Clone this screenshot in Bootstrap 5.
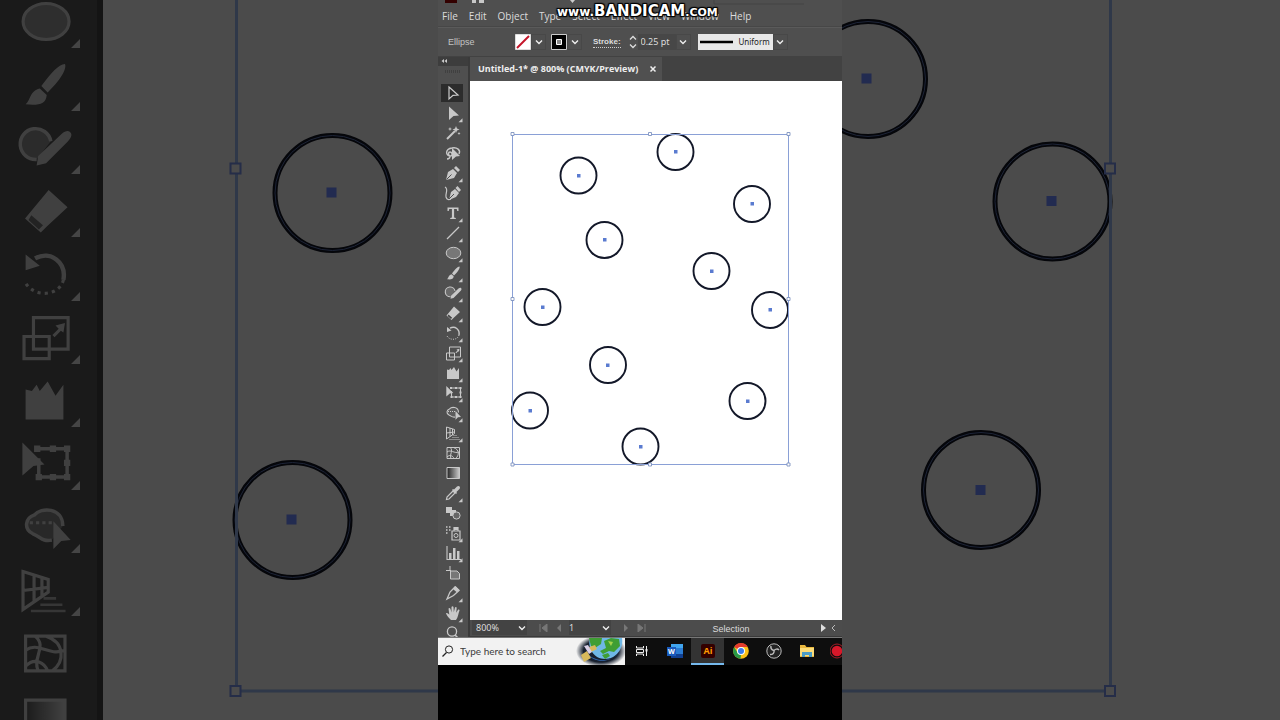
<!DOCTYPE html>
<html lang="en">
<head>
<meta charset="utf-8">
<meta name="viewport" content="width=device-width, initial-scale=1">
<title>Untitled-1* @ 800% (CMYK/Preview)</title>
<link href="https://cdn.jsdelivr.net/npm/bootstrap@5.3.0/dist/css/bootstrap.min.css" rel="stylesheet">
<style>
  body { background: #000; font-family: "Noto Sans", "Open Sans", sans-serif; font-size: 10px; line-height: 16px; color: #dcdcdc; }
  .stage { display: grid; grid-template-columns: 438fr 404fr 438fr; }
  .stage > * { min-width: 0; min-height: 0; }
  .backdrop { background: #4b4b4b; }
  .backdrop svg { width: 100%; height: 100%; }
  svg { display: block; flex: none; }
  a { color: inherit; text-decoration: none; }
  button { border: 0; padding: 0; background: none; color: inherit; display: flex; align-items: center; justify-content: center; flex: none; }
  input { border: 0; padding: 0; background: none; color: inherit; min-width: 0; line-height: 14px; }
  .app-window { background: #4f4f4f; }
  .title-strip { height: 7px; padding-left: 6px; }
  .menu-row { height: 20px; padding-left: 4px; gap: 11px; border-bottom: 1px solid #474747; font-family: "Open Sans", "Noto Sans", sans-serif; }
  .watermark { left: 119px; top: 2px; color: #fff; font-family: "DejaVu Sans", sans-serif; font-weight: 700; font-size: 15px; line-height: 18px; text-shadow: 0 0 2px #000, 1px 1px 1px #000, -1px -1px 1px #000, 1px -1px 1px #000, -1px 1px 1px #000; }
  .watermark small { font-size: 12px; }
  .watermark .tail { font-size: 11px; }
  .control-row { height: 30px; padding-left: 10px; border-top: 1px solid #5a5a5a; border-bottom: 1px solid #424242; }
  .kind { width: 67px; color: #c4c4c4; font-family: "Liberation Sans", sans-serif; font-size: 9px; }
  .drop { width: 15px; height: 16px; border: 1px solid #484848; }
  .swatch-two { margin-left: 5px; }
  .stroke-name { font-family: "Liberation Sans", sans-serif; font-size: 8px; font-weight: 700; line-height: 11px; border-bottom: 1px dotted #ccc; margin: 0 7px 0 11px; }
  .weight { width: 38px; height: 16px; background: #474747; padding-left: 3px; font-size: 9px; }
  .profile { width: 75px; height: 16px; background: #e8e8e8; color: #222; font-size: 8px; gap: 5px; margin-left: 7px; }
  .tool-column { width: 32px; flex: none; background: #4f4f4f; border-right: 2px solid #3a3a3a; }
  .tool-head { height: 9px; background: #3d3d3d; }
  .tool-grip { height: 17px; padding-top: 4px; }
  .tool-grip i { display: block; width: 16px; height: 3px; margin: 0 auto; background: repeating-linear-gradient(90deg, #404040 0 1px, #4f4f4f 1px 2px); }
  .tool-column button { width: 29px; height: 20px; }
  .tool-column button.active { background: linear-gradient(#2c2c2c, #2c2c2c) 3px 1px / 22px 18px no-repeat; }
  .tab-row { height: 24px; background: #424242; }
  .doc-tab { background: #505050; width: 192px; padding-left: 8px; font-family: "Open Sans", "Noto Sans", sans-serif; font-weight: 700; font-size: 9px; color: #eee; white-space: nowrap; }
  .artboard { background: #fff; min-height: 0; }
  .artboard svg { width: 100%; height: 100%; }
  .status-row { height: 17px; background: #4c4c4c; border-bottom: 1px solid #3a3a3a; font-size: 9px; padding-left: 2px; }
  .current-tool { font-family: "Liberation Sans", sans-serif; font-size: 9px; padding-top: 2px; }
  .field { background: #434343; height: 15px; }
  .zoom-level { width: 41px; }
  .page-number { width: 32px; }
  .bottom-line { height: 1px; background: #777; }
  .task-row { height: 27px; background: #0e0e0e; }
  .search-box { width: 187px; flex: none; background: #f2f2f2; color: #333; padding-left: 4px; }
  .search-box input { font-family: Lato, "Open Sans", sans-serif; font-size: 10px; flex: 1; margin-left: 6px; }
  .search-box input::placeholder { color: #3c3c3c; opacity: 1; }
  .task-row button { width: 33px; }
  .task-row button.active { background: #333; border-bottom: 2px solid #76b9ed; }
  .black-foot { height: 56px; }
</style>
</head>
<body>

<!-- shared drawing symbols -->
<svg width="0" height="0" class="position-absolute" aria-hidden="true">
  <defs>
    <linearGradient id="fade"><stop offset="0" stop-color="#222"/><stop offset="1" stop-color="#ccc"/></linearGradient>
    <radialGradient id="space"><stop offset=".7" stop-color="#17202f"/><stop offset="1" stop-color="#17202f" stop-opacity="0"/></radialGradient>
  </defs>
  <symbol id="corner" viewBox="0 0 20 20"><path d="M20 16v4h-4z" transform="translate(-.5 -.8)" fill="#c8c8c8"/></symbol>
  <g fill="#c8c8c8" stroke="none">
    <symbol id="t-select" viewBox="0 0 20 20"><path d="M6 4l9 8-5 .4L6 16z" fill="none" stroke="#ccc" stroke-width="1.2"/></symbol>
    <symbol id="t-direct" viewBox="0 0 20 20"><path d="M6 3.500l10 9-5.500.5L6 17z" fill="#c8c8c8"/></symbol>
    <symbol id="t-wand" viewBox="0 0 20 20"><path d="M4 16l8-8" stroke="#c8c8c8" stroke-width="2"/><path d="M13 3l1 2.500L16.500 6.500 14 7.500 13 10l-1-2.500L9.500 6.500 12 5.500zM7 4l.6 1.400L9 6l-1.400.6L7 8l-.6-1.400L5 6l1.400-.6zM16 9l.5 1 1 .5-1 .5-.5 1-.5-1-1-.5 1-.5z" fill="#c8c8c8"/></symbol>
    <symbol id="t-lasso" viewBox="0 0 20 20"><path d="M8 13c-6 0-6-7 1-8 5-1 9 2 7 6M8 13c2-1 1-4-1-4s-2 3 0 4c0 2-1 3-3 3" fill="none" stroke="#c8c8c8" stroke-width="1.400"/><path d="M9 5l8 8-4 .4L9 17z" fill="#c8c8c8"/></symbol>
    <symbol id="t-pen" viewBox="0 0 20 20"><path d="M3 17l2-8 5-3 4 4-3 5zM11 5l2-2 4 4-2 2z" fill="#c8c8c8"/><path d="M3.500 16.500l5-5" stroke="#4f4f4f"/></symbol>
    <symbol id="t-curve" viewBox="0 0 20 20"><path d="M6 17l2-8 4-3 4 4-3 4zM12.500 5l2-2 3.500 4-2 2z" fill="#c8c8c8"/><path d="M6 16l5-5" stroke="#4f4f4f"/><path d="M2 4c4 2 0 7 1 10s3 3 5 2" fill="none" stroke="#c8c8c8" stroke-width="1.200"/></symbol>
    <symbol id="t-line" viewBox="0 0 20 20"><path d="M4 16L16 4" stroke="#c8c8c8" stroke-width="1.300"/></symbol>
    <symbol id="t-ellipse" viewBox="0 0 20 20"><ellipse cx="10.500" cy="10" rx="7.300" ry="5.700" fill="#777" stroke="#c8c8c8"/></symbol>
    <symbol id="t-brush" viewBox="0 0 20 20"><path d="M16.500 3.500c.5 1-.3 4-5.500 9L9 10.500c3-4 5.500-7 7.500-7zM8.500 11.300l2.200 2c-.2 3-2.700 3.400-6.700 3 1.500-1 1.300-4.300 4.500-5z" fill="#c8c8c8"/></symbol>
    <symbol id="t-blob" viewBox="0 0 20 20"><path d="M12 8A4.900 4.900 0 1 0 7.500 13.800" fill="#6a6a6a" stroke="#c8c8c8" stroke-width="1.100"/><path d="M18 5c1 .7.600 2-1 3.500L10.500 15l-3 .7.500-3L15.500 5.600C16.500 4.700 17.500 4.500 18 5z" fill="#c8c8c8"/></symbol>
    <symbol id="t-eraser" viewBox="0 0 20 20"><path d="M11 3.500l6 5.500-6.500 6-2 2-5-4.500z" fill="#c8c8c8"/><path d="M5.500 11.500l3.700 3.200-1.300 1.300-3.300-3z" fill="#444"/></symbol>
    <symbol id="t-rotate" viewBox="0 0 20 20"><path d="M7 5.200c5-2.700 10 1.300 9 6.800" fill="none" stroke="#c8c8c8" stroke-width="1.400"/><path d="M4 4l4.500 3.500L4 9z" fill="#c8c8c8"/><path d="M16 12c-1 5-9 6-12 1" fill="none" stroke="#c8c8c8" stroke-width="1" stroke-dasharray="1 1.300"/></symbol>
    <symbol id="t-scale" viewBox="0 0 20 20"><path d="M6.500 4h11v10h-11zM3.500 10h8v7h-8z" fill="none" stroke="#c8c8c8"/><path d="M12.500 9.500l2-2-1-1 3-.8-.5 3-.8-.5-2 2z" fill="#c8c8c8"/></symbol>
    <symbol id="t-width" viewBox="0 0 20 20"><path d="M4 6.500l2 .5 1.500-2 1 2L11 4l2.500 4.500L16 5v11H4z" fill="#c8c8c8"/></symbol>
    <symbol id="t-free" viewBox="0 0 20 20"><path d="M7.500 5h10v9h-9V8" fill="none" stroke="#c8c8c8" stroke-width="1.100"/><path d="M16.500 4h2v2h-2zM16.500 13h2v2h-2zM7.500 13h2v2h-2zM12 4h2v2h-2zM12 13h2v2h-2zM16.500 8.500h2v2h-2zM7 4h2v2H7z M3.300 3l7 7-3.500.5-3.500 3z" fill="#c8c8c8"/></symbol>
    <symbol id="t-builder" viewBox="0 0 20 20"><path d="M12 14c-3 .6-3.500-1-6-2-3-1.500-2.500-5 .5-6 2-2.500 9-2.500 9 3.500" fill="#5c5c5c" stroke="#c8c8c8" stroke-width="1.100"/><path d="M5 8.500h8" stroke="#c8c8c8" stroke-dasharray="1 1"/><path d="M12.500 8l5.500 6-3 .3-2.500 2.500z" fill="#c8c8c8"/></symbol>
    <symbol id="t-persp" viewBox="0 0 20 20"><path d="M3.500 4l8 2.500v4l-8 5.500zM7 5v8.500M9.500 6v6M3.500 10l8-1" fill="none" stroke="#c8c8c8"/><path d="M10 12.500h4M9 14.500h7M6 16.500h11" stroke="#999" stroke-width=".8"/></symbol>
    <symbol id="t-mesh" viewBox="0 0 20 20"><path d="M4 4.500h12.500v11H4zM4 9c4-3 7 2 12.500 0M7 4.500c4 3-1 7 1 11M4 14c3-3 6-1 7 1.500M10.500 4.500c6 2 6 8 2 11" fill="none" stroke="#c8c8c8"/></symbol>
    <symbol id="t-gradient" viewBox="0 0 20 20"><path d="M4 4.500h12.500v11H4z" fill="url(#fade)" stroke="#c8c8c8"/></symbol>
    <symbol id="t-dropper" viewBox="0 0 20 20"><path d="M10 8l-6 6-.5 2.500L6 16l6-6z" fill="none" stroke="#c8c8c8" stroke-width="1.200"/><path d="M9 7l1-1 1 .6L14 3.500c2-1.500 4 .5 2.500 2.500L13.400 9l.6 1-1 1z" fill="#c8c8c8"/></symbol>
    <symbol id="t-blend" viewBox="0 0 20 20"><path d="M3 4h6v6H3zM7 7h6v6H7z" fill="#c8c8c8"/><circle cx="13.500" cy="12.500" r="3.600" fill="#666" stroke="#c8c8c8"/></symbol>
    <symbol id="t-spray" viewBox="0 0 20 20"><path d="M9 8h8v9H9zM11 4.500h4V8h-4z" fill="none" stroke="#c8c8c8" stroke-width="1.200"/><path d="M11 4h4v3h-4z" fill="#c8c8c8"/><circle cx="13" cy="12.500" r="2" fill="none" stroke="#c8c8c8"/><path d="M3 4h1.500M6 4h1.500M3 7h1.500M6 7h1.500M3 10h1.500" stroke="#c8c8c8" stroke-width="1.500"/></symbol>
    <symbol id="t-graph" viewBox="0 0 20 20"><path d="M4 3v13.500h14" fill="none" stroke="#c8c8c8" stroke-width="1.100"/><path d="M6 10h2.500v6H6zM10 5h2.500v11H10zM14 8h2.500v8H14z" fill="#c8c8c8"/></symbol>
    <symbol id="t-board" viewBox="0 0 20 20"><path d="M3 7.500h5M7 3v5" stroke="#c8c8c8"/><path d="M7.500 8h6.500l2.500 2.500V16h-9z" fill="#777" stroke="#c8c8c8"/></symbol>
    <symbol id="t-slice" viewBox="0 0 20 20"><path d="M4 16l3-7 5-5 4 3.500-5.500 5z" fill="none" stroke="#c8c8c8" stroke-width="1.300"/><path d="M10 6l4 3.500 2.500-2.500L12.500 3z" fill="#c8c8c8"/></symbol>
    <symbol id="t-hand" viewBox="0 0 20 20"><path d="M8 17c-2-2-4-4-5-6.500 1-1 2 0 3.300 1.200L5.500 5.500c1-1 1.500-.5 2 .5l1 3.500V4c.5-1 1.500-1 2 0l.3 5.300L12 4.500c.5-1 1.500-.7 1.700.3l-.5 5 1.800-3c.6-.8 1.500-.3 1.500.6-1.300 3.500-1.500 7-3.500 9.600z" fill="#c8c8c8"/></symbol>
    <symbol id="t-zoom" viewBox="0 0 20 20"><circle cx="9" cy="8.500" r="4.600" fill="none" stroke="#c8c8c8" stroke-width="1.300"/><path d="M12 12l4 4" stroke="#c8c8c8" stroke-width="1.500"/></symbol>
  </g>
  <symbol id="chev" viewBox="0 0 8 6"><path d="M1 1.500l3 3 3-3" fill="none" stroke="#eee" stroke-width="1.400"/></symbol>
</svg>

<div class="stage vh-100 overflow-hidden">

  <!-- enlarged, dimmed left side -->
  <div class="backdrop" aria-hidden="true">
    <svg viewBox="0 0 438 720" preserveAspectRatio="xMinYMin slice">
      <path d="M0 0h103v720H0z" fill="#141414"/><path d="M0 0h97v720H0z" fill="#1a1a1a"/>
      <g opacity=".22">
        <use href="#t-ellipse" x="13" y="-10" width="63" height="63"/>
        <use href="#t-brush" x="13" y="53" width="63" height="63"/>
        <use href="#t-blob" x="13" y="116" width="63" height="63"/>
        <use href="#t-eraser" x="14" y="179" width="63" height="63"/>
        <use href="#t-rotate" x="13" y="242" width="63" height="63"/>
        <use href="#t-scale" x="13" y="305" width="63" height="63"/>
        <use href="#t-width" x="13" y="369" width="63" height="63"/>
        <use href="#t-free" x="12" y="433" width="63" height="63"/>
        <use href="#t-builder" x="14" y="496" width="63" height="63"/>
        <use href="#t-persp" x="12" y="559" width="63" height="63"/>
        <use href="#t-mesh" x="13" y="622" width="63" height="63"/>
        <use href="#t-gradient" x="13" y="686" width="63" height="63"/>
      </g>
      <path d="M80 39v9h-9zM80 102v9h-9zM80 165v9h-9zM80 228v9h-9zM80 292v9h-9zM80 355v9h-9zM80 418v9h-9zM80 481v9h-9zM80 544v9h-9zM80 607v9h-9z" fill="#454545"/>
      <g fill="none" stroke="#05060a" stroke-width="5"><circle cx="332.500" cy="193" r="57.500"/><circle cx="292.500" cy="520" r="57.500"/></g>
      <g fill="none" stroke="#1d2437" stroke-width="1"><circle cx="332.500" cy="193" r="57.500"/><circle cx="292.500" cy="520" r="57.500"/></g>
      <path d="M236.500 0v691H438" fill="none" stroke="#2f3849" stroke-width="3"/>
      <path d="M326.500 187.500h10v10h-10zM286.500 514.500h10v10h-10z" fill="#222b50"/>
      <path d="M230.500 163.500h10v10h-10zM230.500 686h10v10h-10z" fill="#4b4b4b" stroke="#252d48" stroke-width="2"/>
    </svg>
  </div>

  <div class="app-window d-flex flex-column position-relative overflow-hidden">
    <div class="title-strip d-flex align-items-start">
      <svg width="360" height="7" viewBox="0 0 360 7"><path d="M1 0h12v3H1z" fill="#330000"/><path d="M28 0h4v3h-4zM35 0h5v3h-5z" fill="#c8c8c8"/><path d="M126 0h5l-2.500 3z" fill="#ccc"/><path d="M270 0v4h90" fill="none" stroke="#444"/></svg>
    </div>
    <nav class="menu-row d-flex align-items-center" aria-label="Main menu">
      <a href="#">File</a><a href="#">Edit</a><a href="#">Object</a><a href="#">Type</a><a href="#">Select</a><a href="#">Effect</a><a href="#">View</a><a href="#">Window</a><a href="#">Help</a>
    </nav>
    <div class="watermark position-absolute text-nowrap"><small>www.</small>BANDICAM<span class="tail">.COM</span></div>

    <div class="control-row d-flex align-items-center">
      <span class="kind">Ellipse</span>
      <button aria-label="Fill"><svg width="16" height="16"><path d="M.5.5h15v15H.5z" fill="#fff" stroke="#ddd"/><path d="M2 14L14 2" stroke="#c4152a" stroke-width="2"/></svg></button>
      <button class="drop" aria-label="Fill options"><svg width="8" height="6"><use href="#chev"/></svg></button>
      <button class="swatch-two" aria-label="Stroke color"><svg width="16" height="16"><path d="M.5.5h15v15H.5z" fill="#000" stroke="#ccc"/><path d="M5.500 5.500h5v5h-5z" fill="#888" stroke="#fff"/></svg></button>
      <button class="drop" aria-label="Stroke color options"><svg width="8" height="6"><use href="#chev"/></svg></button>
      <label class="stroke-name" for="weight">Stroke:</label>
      <button aria-label="Step stroke weight"><svg width="10" height="14" viewBox="0 0 10 14"><path d="M2 4.500l3-3 3 3M2 9.500l3 3 3-3" fill="none" stroke="#ddd" stroke-width="1.300"/></svg></button>
      <input id="weight" class="weight" value="0.25 pt">
      <button class="drop" aria-label="Stroke weights"><svg width="8" height="6"><use href="#chev"/></svg></button>
      <button class="profile" aria-label="Uniform profile"><svg width="33" height="4"><path d="M0 2h33" stroke="#000" stroke-width="2.500"/></svg><span>Uniform</span></button>
      <button class="drop" aria-label="Profiles"><svg width="8" height="6"><use href="#chev"/></svg></button>
    </div>

    <div class="d-flex flex-fill overflow-hidden">
      <div class="tool-column overflow-hidden" role="toolbar" aria-label="Tools">
        <div class="tool-head"><svg width="12" height="9"><path d="M6 2v4L3.500 4zM9 2v4L6.500 4z" fill="#ccc"/></svg></div>
        <div class="tool-grip"><i></i></div>
        <button class="active" aria-label="Selection"><svg width="20" height="20"><use href="#t-select"/></svg></button>
        <button aria-label="Direct selection"><svg width="20" height="20"><use href="#t-direct"/><use href="#corner"/></svg></button>
        <button aria-label="Magic wand"><svg width="20" height="20"><use href="#t-wand"/></svg></button>
        <button aria-label="Lasso"><svg width="20" height="20"><use href="#t-lasso"/></svg></button>
        <button aria-label="Pen"><svg width="20" height="20"><use href="#t-pen"/><use href="#corner"/></svg></button>
        <button aria-label="Curvature"><svg width="20" height="20"><use href="#t-curve"/></svg></button>
        <button aria-label="Type"><svg width="20" height="20"><path d="M4.500 4.500h11v3.500h-1.200l-.6-2h-2.600v8.500l1.700.5v1H7.200v-1l1.700-.5V6H6.300l-.6 2H4.500z" fill="#c8c8c8"/><use href="#corner"/></svg></button>
        <button aria-label="Line segment"><svg width="20" height="20"><use href="#t-line"/><use href="#corner"/></svg></button>
        <button aria-label="Ellipse"><svg width="20" height="20"><use href="#t-ellipse"/><use href="#corner"/></svg></button>
        <button aria-label="Paintbrush"><svg width="20" height="20"><use href="#t-brush"/><use href="#corner"/></svg></button>
        <button aria-label="Blob brush"><svg width="20" height="20"><use href="#t-blob"/><use href="#corner"/></svg></button>
        <button aria-label="Eraser"><svg width="20" height="20"><use href="#t-eraser"/><use href="#corner"/></svg></button>
        <button aria-label="Rotate"><svg width="20" height="20"><use href="#t-rotate"/><use href="#corner"/></svg></button>
        <button aria-label="Scale"><svg width="20" height="20"><use href="#t-scale"/><use href="#corner"/></svg></button>
        <button aria-label="Width"><svg width="20" height="20"><use href="#t-width"/><use href="#corner"/></svg></button>
        <button aria-label="Free transform"><svg width="20" height="20"><use href="#t-free"/><use href="#corner"/></svg></button>
        <button aria-label="Shape builder"><svg width="20" height="20"><use href="#t-builder"/><use href="#corner"/></svg></button>
        <button aria-label="Perspective grid"><svg width="20" height="20"><use href="#t-persp"/><use href="#corner"/></svg></button>
        <button aria-label="Mesh"><svg width="20" height="20"><use href="#t-mesh"/></svg></button>
        <button aria-label="Gradient"><svg width="20" height="20"><use href="#t-gradient"/></svg></button>
        <button aria-label="Eyedropper"><svg width="20" height="20"><use href="#t-dropper"/><use href="#corner"/></svg></button>
        <button aria-label="Blend"><svg width="20" height="20"><use href="#t-blend"/></svg></button>
        <button aria-label="Symbol sprayer"><svg width="20" height="20"><use href="#t-spray"/><use href="#corner"/></svg></button>
        <button aria-label="Column graph"><svg width="20" height="20"><use href="#t-graph"/><use href="#corner"/></svg></button>
        <button aria-label="Artboard"><svg width="20" height="20"><use href="#t-board"/></svg></button>
        <button aria-label="Slice"><svg width="20" height="20"><use href="#t-slice"/><use href="#corner"/></svg></button>
        <button aria-label="Hand"><svg width="20" height="20"><use href="#t-hand"/><use href="#corner"/></svg></button>
        <button aria-label="Zoom"><svg width="20" height="20"><use href="#t-zoom"/></svg></button>
      </div>

      <div class="d-flex flex-column flex-grow-1 overflow-hidden">
        <div class="tab-row d-flex">
          <div class="doc-tab d-flex align-items-center">
            <span>Untitled-1* @ 800% (CMYK/Preview)</span>
            <button class="ms-auto me-1" aria-label="Close"><svg width="10" height="10"><path d="M2.500 2.500l5 5M7.500 2.500l-5 5" stroke="#eee" stroke-width="1.500"/></svg></button>
          </div>
        </div>
        <main class="artboard flex-grow-1">
          <svg viewBox="470 81 372 539" preserveAspectRatio="xMinYMin meet" role="img" aria-label="Eleven selected circles">
            <g fill="none" stroke="#131829" stroke-width="1.900">
              <circle cx="675.500" cy="152" r="18"/><circle cx="578.500" cy="175.500" r="18"/><circle cx="752" cy="204" r="18"/><circle cx="604.500" cy="240" r="18"/><circle cx="711.500" cy="271" r="18"/><circle cx="542.500" cy="307" r="18"/><circle cx="770" cy="310" r="18"/><circle cx="608" cy="365" r="18"/><circle cx="530" cy="410.500" r="18"/><circle cx="747.500" cy="401" r="18"/><circle cx="640.500" cy="446.500" r="18"/>
            </g>
            <path d="M512.500 134.500h276v330h-276z" fill="none" stroke="#8aa0d6"/>
            <path d="M674 150h3.500v3.500h-3.500zM577 174h3.500v3.500h-3.500zM750.500 202h3.500v3.500h-3.500zM603 238h3.500v3.500h-3.500zM710 269.500h3.500v3.500h-3.500zM541 305.500h3.500v3.500h-3.500zM768.500 308h3.500v3.500h-3.500zM606 363.500h3.500v3.500h-3.500zM528.500 409h3.500v3.500h-3.500zM746 399.500h3.500v3.500h-3.500zM639 445h3.500v3.500h-3.500z" fill="#5a7bd0"/>
            <path d="M511 132.500h3v3h-3zM648.500 132.500h3v3h-3zM787 132.500h3v3h-3zM511 297.500h3v3h-3zM787 297.500h3v3h-3zM511 463h3v3h-3zM648.500 463h3v3h-3zM787 463h3v3h-3z" fill="#fff" stroke="#7f93c0" stroke-width=".9"/>
          </svg>
        </main>
        <div class="status-row d-flex align-items-center">
          <div class="field d-flex align-items-center ps-1"><input class="zoom-level" aria-label="Zoom level" value="800%"><button aria-label="Zoom levels"><svg width="10" height="6"><use href="#chev"/></svg></button></div>
          <button class="ms-2 ps-1" aria-label="First artboard"><svg width="9" height="8"><path d="M1 0v8M8 0L3 4l5 4z" fill="#777" stroke="#777"/></svg></button>
          <button class="ms-1 ps-1" aria-label="Previous artboard"><svg width="5" height="8"><path d="M5 0L1 4l4 4z" fill="#777"/></svg></button>
          <div class="field d-flex align-items-center ms-2"><input class="page-number" aria-label="Artboard" value="1"><button aria-label="Artboards"><svg width="10" height="6"><use href="#chev"/></svg></button></div>
          <button class="ms-2 ps-1" aria-label="Next artboard"><svg width="6" height="8"><path d="M1 0l4 4-4 4z" fill="#777"/></svg></button>
          <button class="ms-1 ps-1" aria-label="Last artboard"><svg width="9" height="8"><path d="M8 0v8M1 0l5 4-5 4z" fill="#777" stroke="#777"/></svg></button>
          <span class="flex-grow-1 text-center current-tool">Selection</span>
          <svg width="26" height="10"><path d="M5 1l5 4-5 4z" fill="#ddd"/><path d="M19 2l-3 3 3 3" fill="none" stroke="#bbb"/></svg>
        </div>
      </div>
    </div>

    <div class="bottom-line"></div>
    <div class="task-row d-flex">
      <div class="search-box d-flex align-items-center">
        <svg width="12" height="12" viewBox="0 0 12 12"><circle cx="7" cy="4.500" r="3.600" fill="none" stroke="#222"/><path d="M4.500 7.500L.5 11.500" stroke="#222" stroke-width="1.200"/></svg>
        <input type="search" aria-label="Search" placeholder="Type here to search">
        <svg width="50" height="27" viewBox="0 0 50 27"><ellipse cx="26" cy="13" rx="25" ry="16" fill="url(#space)"/><path d="M15 0h32c2 10-6 21-17 21S12 10 15 0z" fill="#6fb7e6"/><path d="M14 0h13l-1 6-6 4-4-2zM29 3l7-3 8 1 1 7-6 6-5-1-6 3-3-3 6-3zM27 17l6-2 2 3-5 3z" fill="#3f9e34"/><path d="M33 3l5 1-2 4z" fill="#a6d14a"/><path d="M13 16c5 9 22 9 30 0-5 7-22 9-30 0z" fill="#3269b4"/><path d="M6 17l6-4 4 7-7 4zM14 9l6-2 2 4-6 3z" fill="#d8b95b"/><path d="M9 8l4-1 4 7-3 2z" fill="#d9cfe6"/></svg>
      </div>
      <button aria-label="Task view"><svg width="14" height="12" viewBox="0 0 14 12"><path d="M1.500 1v2h7V1M1.500 11V9h7v2M1.500 4.500h7v3h-7zM11.500 1v10" fill="none" stroke="#eee"/><path d="M10.500 4h2v2.500h-2z" fill="#eee"/></svg></button>
      <button aria-label="Word"><svg width="18" height="16" viewBox="0 0 18 16"><path d="M5 1h12v14H5z" fill="#2b7cd3"/><path d="M5 1h12v4H5z" fill="#41a5ee"/><path d="M5 11h12v4H5z" fill="#103f91"/><path d="M1 4h9v9H1z" fill="#185abd"/><text x="5.500" y="11" text-anchor="middle" font-family="Open Sans, sans-serif" font-weight="700" font-size="7" fill="#fff">W</text></svg></button>
      <button class="active" aria-label="Illustrator"><svg width="16" height="16" viewBox="0 0 16 16"><rect x="1" y="2" width="14" height="14" rx="2" fill="#330000"/><text x="8" y="12" text-anchor="middle" font-family="Open Sans, sans-serif" font-weight="700" font-size="9" fill="#ff9a00">Ai</text></svg></button>
      <button aria-label="Chrome"><svg width="16" height="16" viewBox="0 0 16 16"><circle cx="8" cy="8" r="7.800" fill="#fbc116"/><path d="M8 8L1.200 4.100A7.800 7.800 0 0 1 14.800 4.100H8z" fill="#e33b2e"/><path d="M1.200 4.100L4.700 10 8 11.500 7.500 15.800A7.800 7.800 0 0 1 1.200 4.100z" fill="#279847"/><circle cx="8" cy="8" r="4" fill="#fff"/><circle cx="8" cy="8" r="3" fill="#3b7de9"/></svg></button>
      <button aria-label="OBS"><svg width="16" height="16" viewBox="0 0 16 16"><circle cx="8" cy="8" r="7.200" fill="#222" stroke="#bbb"/><path d="M5 3c-.5 2.500 1 4 3 4.500 1.500-1.500 3.500-2 5-.5M8 7.500c.5 2.500-1 4-4 4" fill="none" stroke="#bbb" stroke-width="1.500"/></svg></button>
      <button aria-label="File Explorer"><svg width="16" height="14" viewBox="0 0 16 14"><path d="M1 1h5l1.500 2H15v10H1z" fill="#e9b83f"/><path d="M1 4h14v8H1z" fill="#fbdc79"/><path d="M3 13V8h10v5h-3v-2H6v2z" fill="#4b9cc7"/></svg></button>
      <button aria-label="Bandicam"><svg width="20" height="16" viewBox="0 0 20 16"><circle cx="7" cy="8" r="7" fill="none" stroke="#a51c26"/><circle cx="7" cy="8" r="5.300" fill="#d8182a"/></svg></button>
    </div>
    <div class="black-foot bg-black"></div>
  </div>

  <!-- enlarged, dimmed right side -->
  <div class="backdrop" aria-hidden="true">
    <svg viewBox="842 0 438 720" preserveAspectRatio="xMaxYMin slice">
      <g fill="none" stroke="#05060a" stroke-width="5"><circle cx="868" cy="79" r="57.500"/><circle cx="1052.500" cy="201.500" r="57.500"/><circle cx="981" cy="490" r="57.500"/></g>
      <g fill="none" stroke="#1d2437" stroke-width="1"><circle cx="868" cy="79" r="57.500"/><circle cx="1052.500" cy="201.500" r="57.500"/><circle cx="981" cy="490" r="57.500"/></g>
      <path d="M1110.500 0v691H842" fill="none" stroke="#2f3849" stroke-width="3"/>
      <path d="M861.500 73.500h10v10h-10zM1046.500 196h10v10h-10zM975.500 485h10v10h-10z" fill="#222b50"/>
      <path d="M1105 163.500h10v10h-10zM1105 686h10v10h-10z" fill="#4b4b4b" stroke="#252d48" stroke-width="2"/>
    </svg>
  </div>
</div>
<script src="https://cdn.jsdelivr.net/npm/bootstrap@5.3.0/dist/js/bootstrap.bundle.min.js"></script>
</body>
</html>
